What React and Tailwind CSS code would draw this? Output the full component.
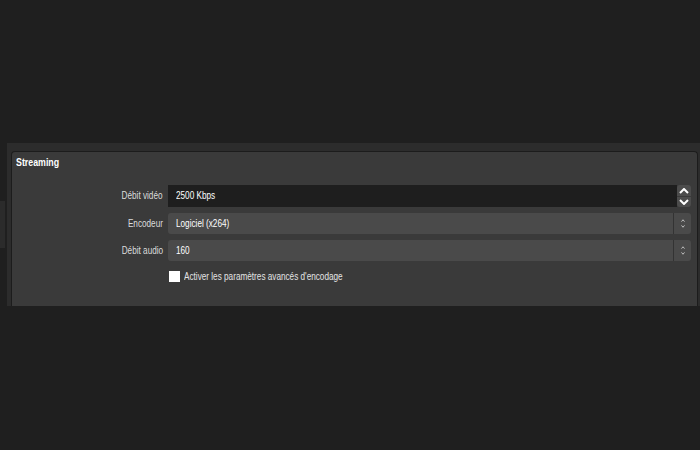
import React from 'react';

const ArrowUp = ({ className }) => (
  <svg viewBox="0 0 10 6" className={className} fill="none" stroke="currentColor" strokeWidth="2">
    <polyline points="1,5 5,1 9,5" />
  </svg>
);

const ArrowDown = ({ className }) => (
  <svg viewBox="0 0 10 6" className={className} fill="none" stroke="currentColor" strokeWidth="2">
    <polyline points="1,1 5,5 9,1" />
  </svg>
);

// petite flèche double des listes déroulantes
const ComboArrows = () => (
  <div className="flex flex-col items-center gap-[3px] text-[#c8c8c8]">
    <svg viewBox="0 0 6 4" className="w-[6px] h-[3px]" fill="none" stroke="currentColor" strokeWidth="1.2">
      <polyline points="1,3.5 3,1 5,3.5" />
    </svg>
    <svg viewBox="0 0 6 4" className="w-[6px] h-[3px]" fill="none" stroke="currentColor" strokeWidth="1.2">
      <polyline points="1,0.5 3,3 5,0.5" />
    </svg>
  </div>
);

// texte étroit (la capture est compressée horizontalement)
const Narrow = ({ children, right }) => (
  <span className={`inline-block whitespace-nowrap text-[10.5px] scale-x-[0.78] ${right ? 'origin-right' : 'origin-left'}`}>
    {children}
  </span>
);

const Row = ({ label, children, className = '' }) => (
  <div className={`flex items-stretch ${className}`}>
    <div className="w-[151px] flex items-center justify-end text-[#dcdcdc]">
      <Narrow right>{label}</Narrow>
    </div>
    <div className="flex-1 ml-[5px] flex">{children}</div>
  </div>
);

const Combo = ({ value }) => (
  <div className="flex-1 flex h-[21px] bg-[#4a4a4a] rounded-[3px]">
    <div className="flex-1 flex items-center pl-[8px] text-white">
      <Narrow>{value}</Narrow>
    </div>
    <div className="w-[18px] border-l border-[#333333] flex items-center justify-center">
      <ComboArrows />
    </div>
  </div>
);

export default function App() {
  return (
    <div className="w-[700px] h-[450px] bg-[#1f1f1f] pt-[143px] flex flex-col font-['Liberation_Sans',sans-serif]">
      <div className="flex h-[163px]">
        {/* bord du panneau de gauche */}
        <div className="w-[7px] pt-[58px]">
          <div className="w-[5px] h-[47px] bg-[#2b2b2b]"></div>
        </div>

        <div className="flex-1 bg-[#2c2c2c] pl-[4px] pt-[8px] pr-[2px] overflow-hidden">
          <div className="h-full border border-b-0 border-[#1c1c1c] rounded-t-[4px] bg-[#3a3a3a] pr-[6px]">
            <div className="pl-[4px] pt-[2px] h-[14px] leading-[13px] font-bold text-white">
              <span className="inline-block whitespace-nowrap text-[10.5px] scale-x-[0.84] origin-left">Streaming</span>
            </div>

            <div className="mt-[19px] flex flex-col">
              <Row label="Débit vidéo">
                <div className="flex-1 flex h-[22px]">
                  <div className="flex-1 bg-[#1e1e1e] flex items-center pl-[8px] text-white">
                    <Narrow>2500 Kbps</Narrow>
                  </div>
                  <div className="w-[14px] flex flex-col gap-[1px]">
                    <div className="h-[11px] bg-[#4c4c4c] rounded-t-[3px] flex items-center justify-center text-white">
                      <ArrowUp className="w-[10px] h-[6px]" />
                    </div>
                    <div className="h-[10px] bg-[#4c4c4c] rounded-b-[3px] flex items-center justify-center text-white">
                      <ArrowDown className="w-[10px] h-[6px]" />
                    </div>
                  </div>
                </div>
              </Row>

              <Row label="Encodeur" className="mt-[6px]">
                <Combo value="Logiciel (x264)" />
              </Row>

              <Row label="Débit audio" className="mt-[6px]">
                <Combo value="160" />
              </Row>

              <div className="mt-[8px] ml-[157px] flex items-center gap-[4px] text-[#e4e4e4]">
                <div className="w-[11px] h-[11px] bg-white"></div>
                <Narrow>Activer les paramètres avancés d'encodage</Narrow>
              </div>
            </div>
          </div>
        </div>
      </div>
    </div>
  );
}
